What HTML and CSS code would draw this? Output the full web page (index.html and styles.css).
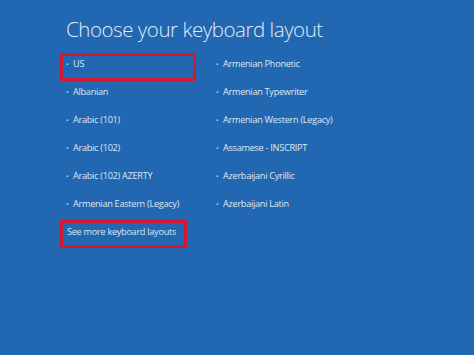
FILE: index.html
```html
<!doctype html>
<html lang="en">
<head>
	<meta charset="UTF-8">
	<title>Choose your keyboard layout</title>
	<link rel="stylesheet" href="styles.css">
</head>
<body>
	<div class="page">
		<h1>Choose your keyboard layout</h1>
		<div class="layouts">
			<ul class="col">
				<li class="item picked">US</li>
				<li class="item">Albanian</li>
				<li class="item">Arabic (101)</li>
				<li class="item">Arabic (102)</li>
				<li class="item">Arabic (102) AZERTY</li>
				<li class="item">Armenian Eastern (Legacy)</li>
			</ul>
			<ul class="col">
				<li class="item">Armenian Phonetic</li>
				<li class="item">Armenian Typewriter</li>
				<li class="item">Armenian Western (Legacy)</li>
				<li class="item">Assamese - INSCRIPT</li>
				<li class="item">Azerbaijani Cyrillic</li>
				<li class="item">Azerbaijani Latin</li>
			</ul>
		</div>
		<div class="more picked">See more keyboard layouts</div>
	</div>
</body>
</html>
```

FILE: styles.css
```css
html, body, div, h1, ul, li {
	margin: 0;
	padding: 0;
}
body {
	background-color: #2167b1;
	font-family: "Open Sans", "Liberation Sans", sans-serif;
	color: #dce8f6;
}
ul {
	list-style: none;
}
.page {
	padding: 14px 0 0 60px;
}
h1 {
	font-size: 20.5px;
	font-weight: 300;
	letter-spacing: -0.45px;
	line-height: 30px;
	padding-left: 6px;
	margin-bottom: 9px;
	color: #e2ecf8;
}
.layouts {
	display: flex;
	gap: 14px;
}
.item {
	box-sizing: border-box;
	width: 136px;
	height: 28px;
	padding: 1px 0 0 3px;
	border: 3px solid transparent;
	font-size: 9.2px;
	letter-spacing: -0.3px;
	line-height: 14px;
	white-space: nowrap;
}
.item:before {
	content: "\2022";
	display: inline-block;
	width: 7px;
	font-size: 7px;
	color: #b9d0ec;
}
.more {
	box-sizing: border-box;
	width: 127px;
	height: 28px;
	margin-top: -1px;
	padding: 2px 0 0 4px;
	border: 3px solid transparent;
	font-size: 9.2px;
	letter-spacing: -0.3px;
	line-height: 14px;
	white-space: nowrap;
}
.picked {
	border-color: #d2192e;
}
```
